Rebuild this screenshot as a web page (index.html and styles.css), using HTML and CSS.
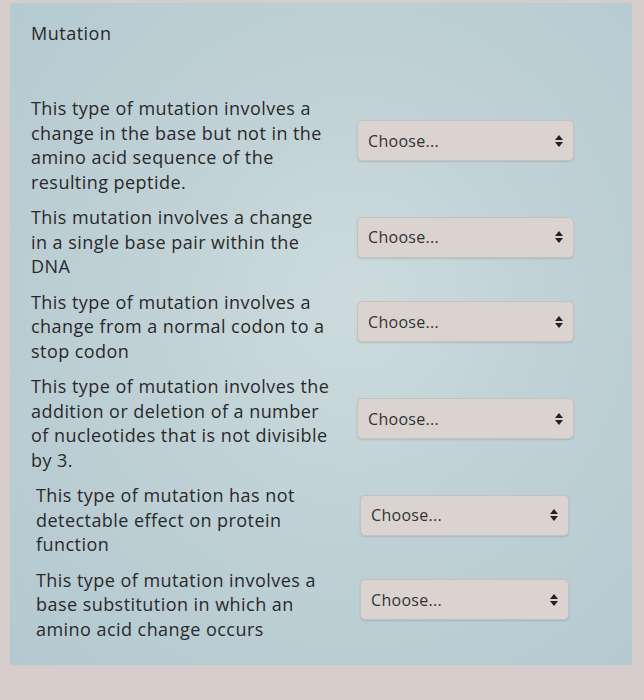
FILE: index.html
```html
<!DOCTYPE html>
<html lang="en">
<head>
  <meta charset="UTF-8" />
  <meta name="viewport" content="width=device-width, initial-scale=1.0"/>
  <title>Mutation</title>
  <link rel="stylesheet" href="styles.css">
</head>
<body>

  <div class="panel">
    <div class="title">Mutation</div>

    <div class="rows">
      <div class="row">
        <p class="prompt">This type of mutation involves a<br>change in the base but not in the<br>amino acid sequence of the<br>resulting peptide.</p>
        <div class="select"><span>Choose...</span><span class="arrows"></span></div>
      </div>

      <div class="row">
        <p class="prompt">This mutation involves a change<br>in a single base pair within the<br>DNA</p>
        <div class="select"><span>Choose...</span><span class="arrows"></span></div>
      </div>

      <div class="row">
        <p class="prompt">This type of mutation involves a<br>change from a normal codon to a<br>stop codon</p>
        <div class="select"><span>Choose...</span><span class="arrows"></span></div>
      </div>

      <div class="row">
        <p class="prompt">This type of mutation involves the<br>addition or deletion of a number<br>of nucleotides that is not divisible<br>by 3.</p>
        <div class="select"><span>Choose...</span><span class="arrows"></span></div>
      </div>

      <div class="row shifted">
        <p class="prompt">This type of mutation has not<br>detectable effect on protein<br>function</p>
        <div class="select"><span>Choose...</span><span class="arrows"></span></div>
      </div>

      <div class="row shifted">
        <p class="prompt">This type of mutation involves a<br>base substitution in which an<br>amino acid change occurs</p>
        <div class="select"><span>Choose...</span><span class="arrows"></span></div>
      </div>
    </div>
  </div>

</body>
</html>
```

FILE: styles.css
```css
body {
  font-family: 'Open Sans', 'Liberation Sans', sans-serif;
  background-color: #d6ccc9;
  margin: 0;
  padding: 0;
  color: #2a2a2a;
}

.panel {
  margin: 3px 12px 0 10px;
  height: 662px;
  box-sizing: border-box;
  padding: 18px 20px 0 21px;
  border-radius: 4px;
  background: radial-gradient(ellipse at 55% 45%, #cddbdc 0%, #bfd1d6 45%, #b3c8d0 100%);
}

.title {
  font-size: 18px;
  letter-spacing: 0.5px;
  line-height: 24px;
}

.rows {
  margin-top: 51px;
  display: flex;
  flex-direction: column;
  gap: 11px;
}

.row {
  display: flex;
  align-items: center;
}

.row.shifted {
  padding-left: 5px;
}

.prompt {
  margin: 0;
  width: 326px;
  font-size: 18px;
  letter-spacing: 0.45px;
  line-height: 24.5px;
}

.row.shifted .prompt {
  width: 324px;
}

.select {
  width: 217px;
  height: 41px;
  margin-bottom: 9px;
  box-sizing: border-box;
  padding: 0 10px 0 10px;
  display: flex;
  align-items: center;
  justify-content: space-between;
  background-color: #dad3cf;
  border: 1px solid #c7c1bd;
  border-radius: 5px;
  box-shadow: 0 1px 2px rgba(0,0,0,0.12);
  font-size: 16px;
  letter-spacing: 0.3px;
  color: #333;
}

.row.shifted .select {
  width: 209px;
}

/* up/down triangles of the native select */
.arrows {
  width: 8px;
  height: 12px;
  position: relative;
}

.arrows::before,
.arrows::after {
  content: "";
  position: absolute;
  left: 0;
  border-left: 4px solid transparent;
  border-right: 4px solid transparent;
}

.arrows::before {
  top: 0;
  border-bottom: 5px solid #222;
}

.arrows::after {
  bottom: 0;
  border-top: 5px solid #222;
}
```
